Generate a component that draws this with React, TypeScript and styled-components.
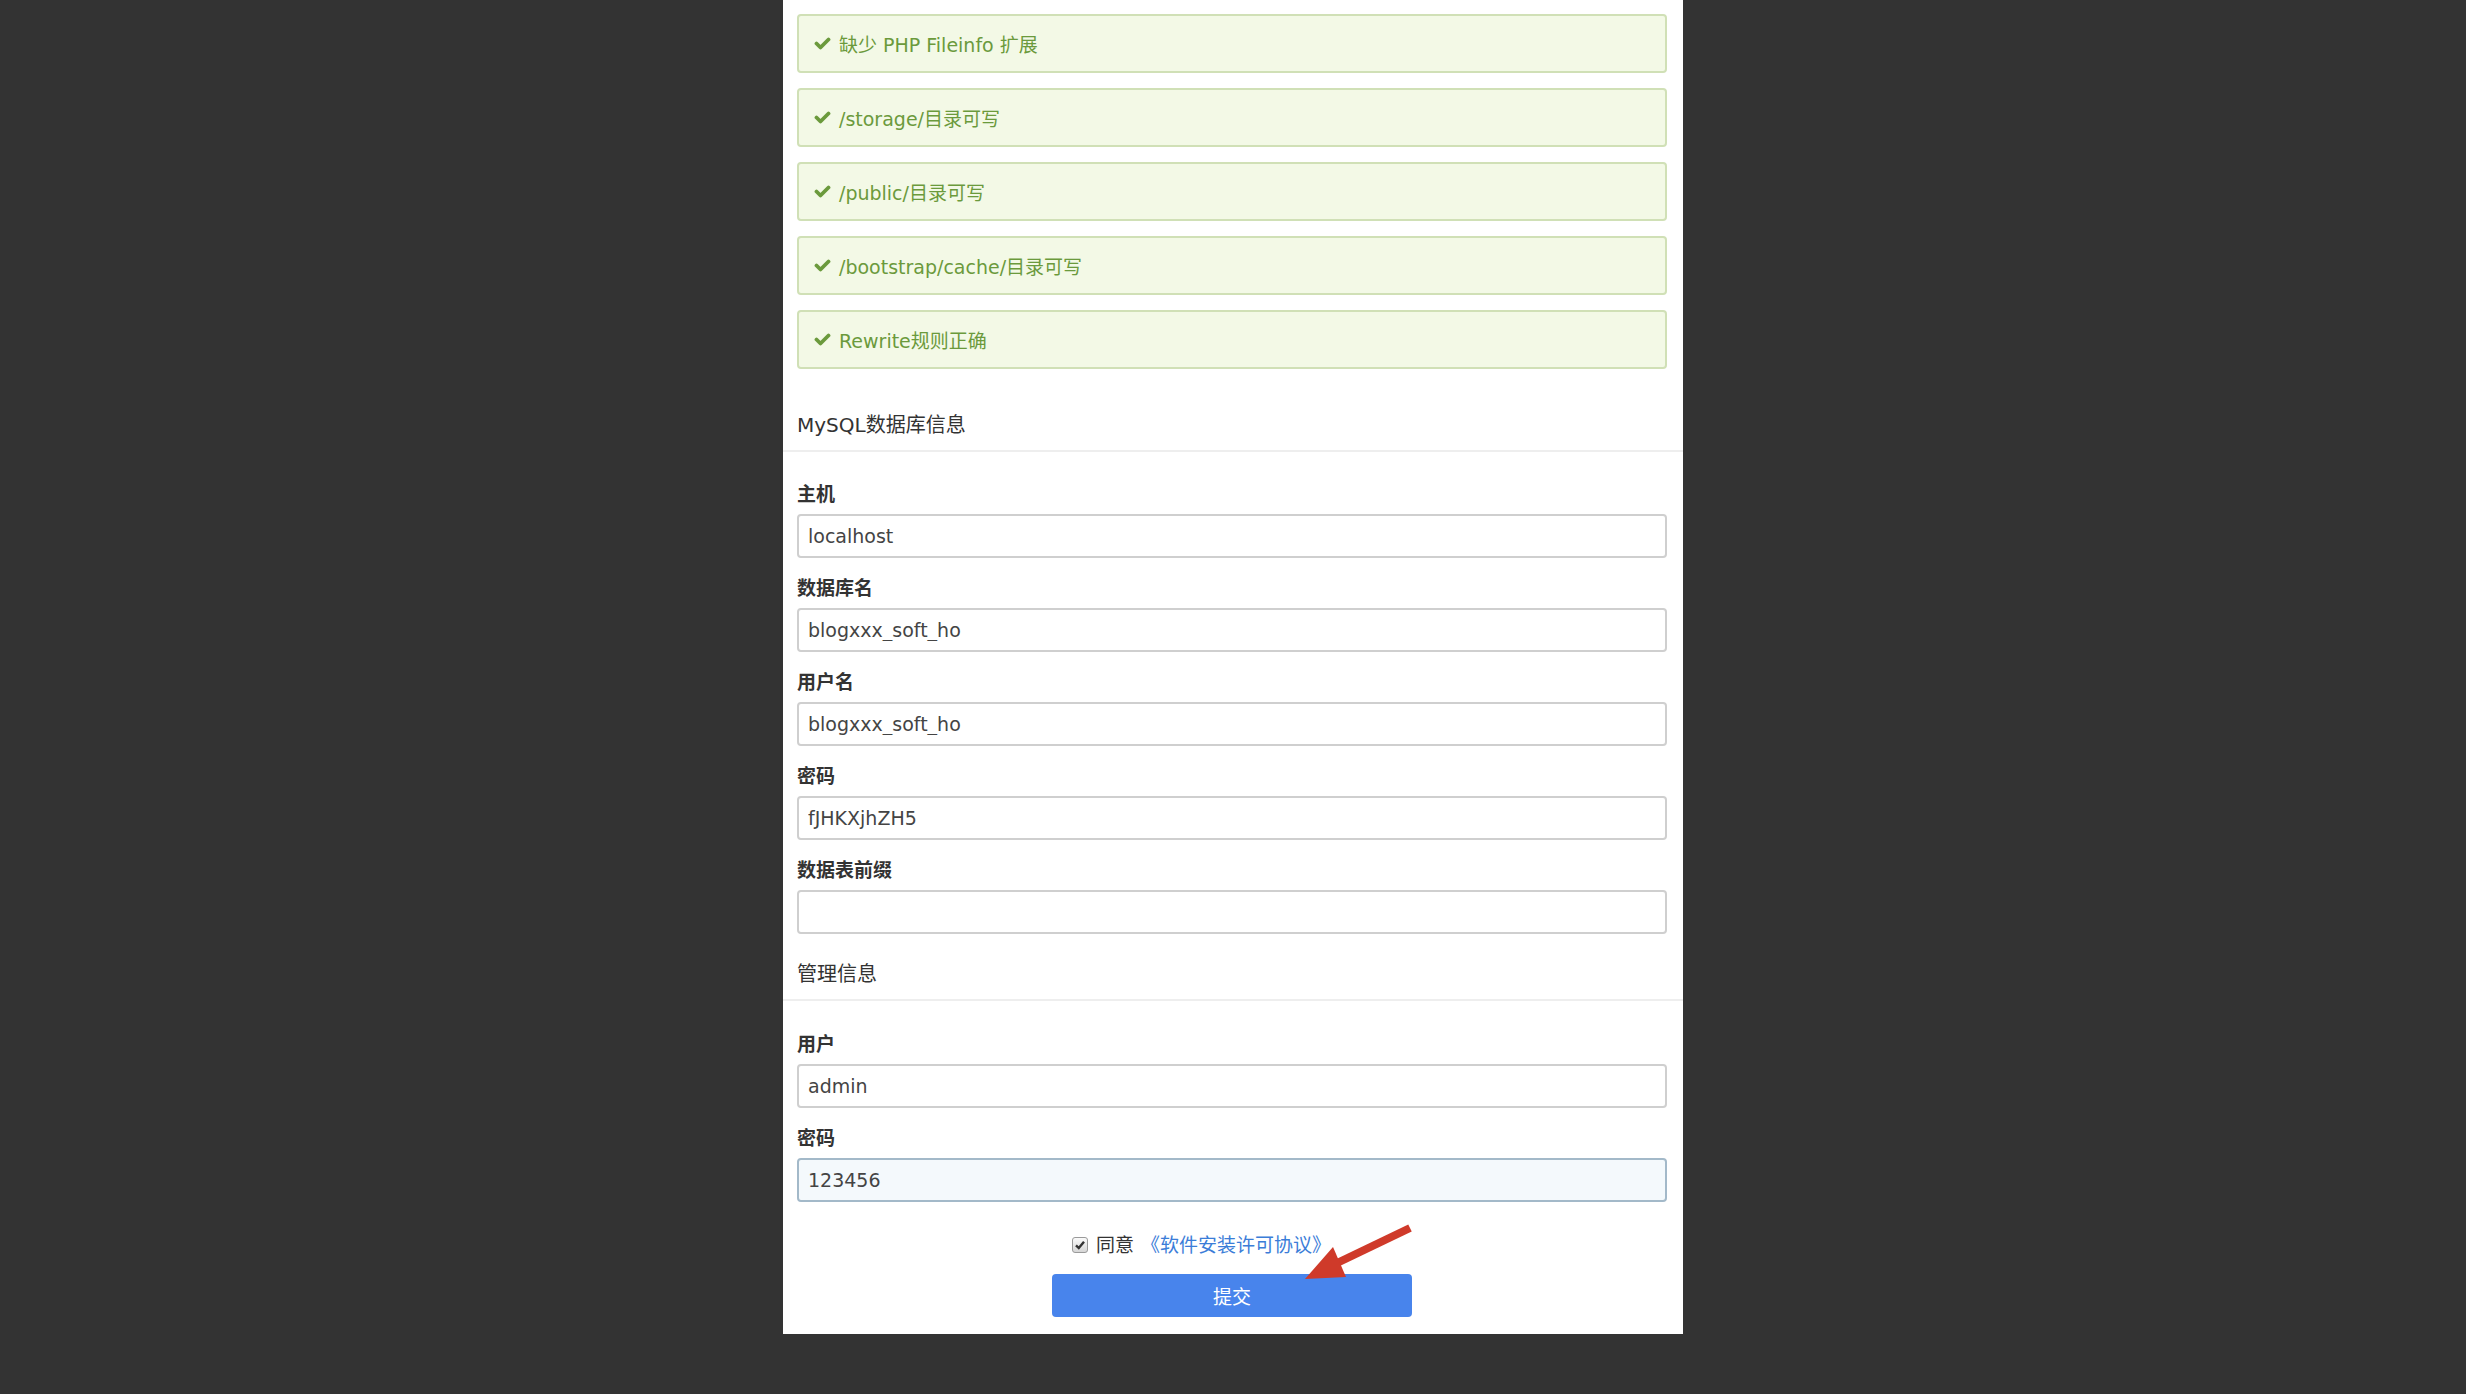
import React from "react";
import styled, { createGlobalStyle } from "styled-components";

const GlobalStyle = createGlobalStyle`
  * {
    box-sizing: border-box;
  }

  html,
  body {
    margin: 0;
    padding: 0;
    background: #333333;
  }

  body {
    font-family: "DejaVu Sans", "Noto Sans CJK SC", sans-serif;
    color: #333;
  }
`;

const StyledPanel = styled.main`
  width: 900px;
  margin: 0 auto;
  background: #fff;
  padding: 14px 0 17px;
`;

const StyledChecks = styled.ul`
  list-style: none;
  margin: 0;
  padding: 0 16px 0 14px;
  display: flex;
  flex-direction: column;
  gap: 15px;
`;

const StyledCheckItem = styled.li`
  height: 59px;
  display: flex;
  align-items: center;
  gap: 8px;
  padding: 0 15px;
  background: #f3f9e6;
  border: 2px solid #d0e0b6;
  border-radius: 4px;
  color: #6b9a3c;
  font-size: 19px;

  svg {
    flex: none;
  }
`;

const StyledSectionTitle = styled.h3<{ $top: number }>`
  margin: ${({ $top }) => $top}px 0 0;
  padding: 0 16px 10px 14px;
  font-size: 20px;
  line-height: 30px;
  font-weight: normal;
  color: #333;
  border-bottom: 2px solid #eeeeee;
`;

const StyledFields = styled.div<{ $top: number }>`
  padding: ${({ $top }) => $top}px 16px 0 14px;
  display: flex;
  flex-direction: column;
  gap: 17px;
`;

const StyledGroup = styled.div`
  display: flex;
  flex-direction: column;
`;

const StyledLabel = styled.label`
  display: block;
  font-size: 19px;
  line-height: 26px;
  font-weight: bold;
  color: #333;
  margin-bottom: 7px;
`;

const StyledInput = styled.input<{ $active?: boolean }>`
  width: 100%;
  height: 44px;
  padding: 0 9px;
  font-family: "DejaVu Sans", "Noto Sans CJK SC", sans-serif;
  font-size: 19px;
  color: #444;
  background: ${({ $active }) => ($active ? "#f4f9fc" : "#fff")};
  border: 2px solid ${({ $active }) => ($active ? "#a3b9c9" : "#cfcfcf")};
  border-radius: 4px;
  outline: none;
`;

const StyledActions = styled.div`
  position: relative;
  margin-top: 30px;
  padding: 0 16px 0 14px;
`;

const StyledAgree = styled.div`
  display: flex;
  align-items: center;
  justify-content: center;
  padding-right: 61px;
  font-size: 19px;
  line-height: 26px;
  color: #333;
`;

const StyledTick = styled.span`
  width: 16px;
  height: 16px;
  margin-right: 8px;
  border: 1px solid #9a9a9a;
  border-radius: 3px;
  background: linear-gradient(#fbfbfb, #d6d6d6);
  display: inline-flex;
  align-items: center;
  justify-content: center;
`;

const StyledLink = styled.a`
  margin-left: 7px;
  color: #3b7dd8;
  text-decoration: none;
`;

const StyledSubmit = styled.button`
  display: block;
  width: 360px;
  height: 43px;
  margin: 16px auto 0;
  border: 0;
  border-radius: 4px;
  background: #4884ec;
  color: #fff;
  font-family: "DejaVu Sans", "Noto Sans CJK SC", sans-serif;
  font-size: 19px;
`;

const StyledArrow = styled.svg`
  position: absolute;
  left: 512px;
  top: -14px;
  pointer-events: none;
`;

const CheckIcon = () => (
  <svg width="17" height="13" viewBox="0 0 17 13">
    <polyline
      points="2.5,6.5 6.5,10.5 14.5,2.5"
      fill="none"
      stroke="currentColor"
      strokeWidth="3.8"
      strokeLinecap="round"
      strokeLinejoin="round"
    />
  </svg>
);

const checks = [
  "缺少 PHP Fileinfo 扩展",
  "/storage/目录可写",
  "/public/目录可写",
  "/bootstrap/cache/目录可写",
  "Rewrite规则正确",
];

const database = [
  { label: "主机", value: "localhost" },
  { label: "数据库名", value: "blogxxx_soft_ho" },
  { label: "用户名", value: "blogxxx_soft_ho" },
  { label: "密码", value: "fJHKXjhZH5" },
  { label: "数据表前缀", value: "" },
];

const Field = ({
  label,
  value,
  active,
}: {
  label: string;
  value: string;
  active?: boolean;
}) => (
  <StyledGroup>
    <StyledLabel>{label}</StyledLabel>
    <StyledInput type="text" defaultValue={value} $active={active} />
  </StyledGroup>
);

const App = () => (
  <>
    <GlobalStyle />
    <StyledPanel>
      <StyledChecks>
        {checks.map((text) => (
          <StyledCheckItem key={text}>
            <CheckIcon />
            {text}
          </StyledCheckItem>
        ))}
      </StyledChecks>

      <StyledSectionTitle $top={41}>MySQL数据库信息</StyledSectionTitle>
      <StyledFields $top={29}>
        {database.map((f) => (
          <Field key={f.label} label={f.label} value={f.value} />
        ))}
      </StyledFields>

      <StyledSectionTitle $top={25}>管理信息</StyledSectionTitle>
      <StyledFields $top={30}>
        <Field label="用户" value="admin" />
        <Field label="密码" value="123456" active />
      </StyledFields>

      <StyledActions>
        <StyledAgree>
          <StyledTick>
            <svg width="12" height="12" viewBox="0 0 12 12">
              <path
                d="M2 6.3 L4.8 9 L10 2.8"
                fill="none"
                stroke="#333"
                strokeWidth="2.4"
              />
            </svg>
          </StyledTick>
          同意
          <StyledLink href="#">《软件安装许可协议》</StyledLink>
        </StyledAgree>
        <StyledSubmit type="button">提交</StyledSubmit>

        <StyledArrow width="125" height="67" viewBox="0 0 125 67">
          <line x1="115" y1="10" x2="40" y2="46" stroke="#cf3a2a" strokeWidth="8" />
          <polygon points="10,61 38,29 51,59" fill="#cf3a2a" />
        </StyledArrow>
      </StyledActions>
    </StyledPanel>
  </>
);

export default App;
